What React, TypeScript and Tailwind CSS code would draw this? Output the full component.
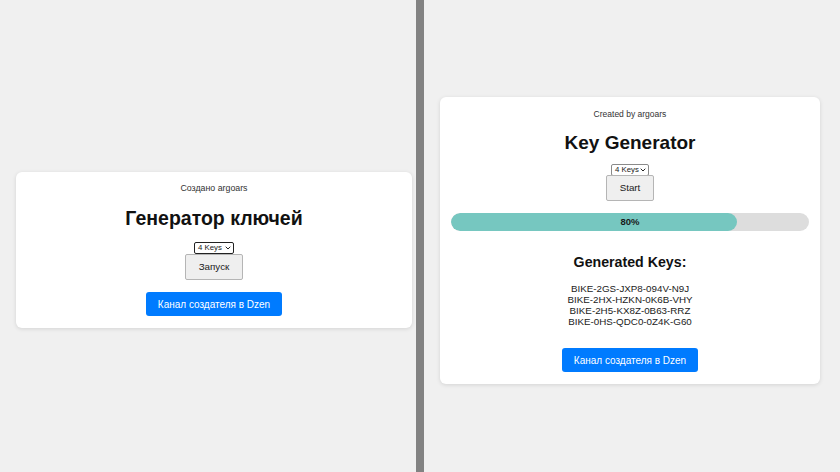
import React from "react";

const keys = [
  "BIKE-2GS-JXP8-094V-N9J",
  "BIKE-2HX-HZKN-0K6B-VHY",
  "BIKE-2H5-KX8Z-0B63-RRZ",
  "BIKE-0HS-QDC0-0Z4K-G60",
];

function KeySelect({ dark }: { dark?: boolean }) {
  return (
    <div
      className={
        "flex items-center h-[12px] px-[2px] bg-white rounded-[2px] border text-[7.8px] leading-none text-[#222] whitespace-nowrap " +
        (dark ? "border-[#222] w-[40px]" : "border-[#8a8a8a] w-[38px]")
      }
    >
      <span className="pl-[1px]">4 Keys</span>
      <svg width="6" height="4" viewBox="0 0 6 4" className="ml-auto shrink-0">
        <path d="M0.7 0.7 L3 3 L5.3 0.7" fill="none" stroke="#222" strokeWidth="1" />
      </svg>
    </div>
  );
}

function GrayButton({ label }: { label: string }) {
  return (
    <div className="px-[13px] h-[26px] flex items-center bg-[#efefef] border border-[#b5b5b5] rounded-[2px] text-[9.8px] text-[#222]">
      {label}
    </div>
  );
}

function BlueButton() {
  return (
    <div className="px-[12px] h-[24px] flex items-center bg-[#007bff] rounded-[3px] text-white text-[10px]">
      Канал создателя в Dzen
    </div>
  );
}

export default function App() {
  return (
    <div
      className="w-[840px] h-[472px] flex bg-[#f0f0f0] overflow-hidden"
      style={{ fontFamily: '"Liberation Sans", Arial, sans-serif' }}
    >
      {/* Left: Russian version, idle */}
      <div className="w-[416px] pt-[172px] pl-[16px]">
        <div className="w-[396px] bg-white rounded-[6px] shadow-[0_1px_4px_rgba(0,0,0,0.12)] flex flex-col items-center pt-[11px] pb-[12px]">
          <div className="text-[8.8px] leading-[11px] text-[#333]">Создано argoars</div>
          <div className="mt-[13px] text-[19.5px] leading-[23px] font-bold text-[#111]">
            Генератор ключей
          </div>
          <div className="mt-[12px]">
            <KeySelect dark />
          </div>
          <GrayButton label="Запуск" />
          <div className="mt-[12px]">
            <BlueButton />
          </div>
        </div>
      </div>

      {/* Divider */}
      <div className="w-[8px] h-full bg-[#828282]" />

      {/* Right: English version, generating */}
      <div className="flex-1 pt-[97px] pl-[16px]">
        <div className="w-[380px] bg-white rounded-[6px] shadow-[0_1px_4px_rgba(0,0,0,0.12)] flex flex-col items-center pt-[12px] pb-[12px] px-[11px]">
          <div className="text-[8.5px] leading-[10px] text-[#333]">Created by argoars</div>
          <div className="mt-[12px] text-[19px] leading-[23px] font-bold text-[#111]">
            Key Generator
          </div>
          <div className="mt-[10px]">
            <KeySelect />
          </div>
          <div className="-mt-[1px]">
            <GrayButton label="Start" />
          </div>
          <div className="mt-[12px] w-full h-[18px] rounded-full bg-[#dddddd] relative overflow-hidden">
            <div className="h-full w-[80%] bg-[#76c7c0] rounded-full" />
            <div className="absolute inset-0 flex items-center justify-center text-[9.5px] font-bold text-[#1a1a1a]">
              80%
            </div>
          </div>
          <div className="mt-[23px] text-[14.2px] leading-[17px] font-bold text-[#111]">
            Generated Keys:
          </div>
          <div className="mt-[12px] flex flex-col items-center text-[9.8px] leading-[11px] text-[#222]">
            {keys.map((k) => (
              <div key={k}>{k}</div>
            ))}
          </div>
          <div className="mt-[21px]">
            <BlueButton />
          </div>
        </div>
      </div>
    </div>
  );
}
